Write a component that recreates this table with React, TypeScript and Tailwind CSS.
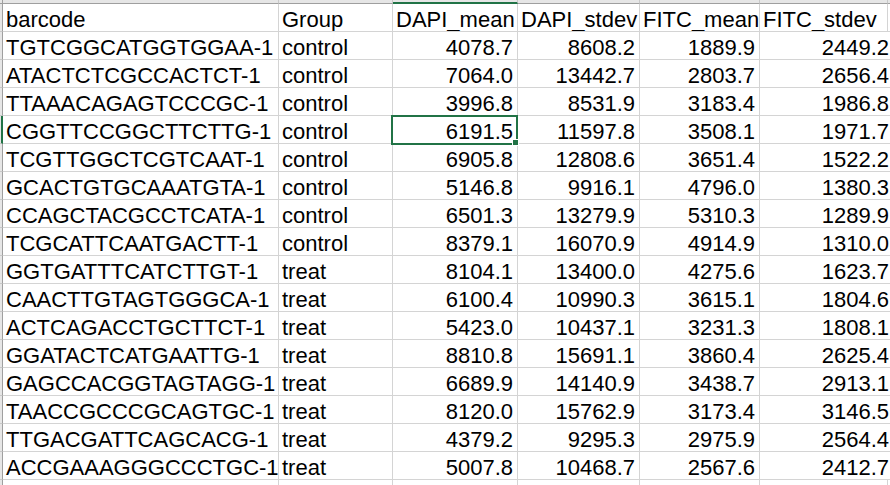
const widths = ['w-[276px]', 'w-[114px]', 'w-[125px]', 'w-[122px]', 'w-[120px]', 'w-[128px]'];

const header = ['barcode', 'Group', 'DAPI_mean', 'DAPI_stdev', 'FITC_mean', 'FITC_stdev'];

const rows: string[][] = [
  ['TGTCGGCATGGTGGAA-1', 'control', '4078.7', '8608.2', '1889.9', '2449.2'],
  ['ATACTCTCGCCACTCT-1', 'control', '7064.0', '13442.7', '2803.7', '2656.4'],
  ['TTAAACAGAGTCCCGC-1', 'control', '3996.8', '8531.9', '3183.4', '1986.8'],
  ['CGGTTCCGGCTTCTTG-1', 'control', '6191.5', '11597.8', '3508.1', '1971.7'],
  ['TCGTTGGCTCGTCAAT-1', 'control', '6905.8', '12808.6', '3651.4', '1522.2'],
  ['GCACTGTGCAAATGTA-1', 'control', '5146.8', '9916.1', '4796.0', '1380.3'],
  ['CCAGCTACGCCTCATA-1', 'control', '6501.3', '13279.9', '5310.3', '1289.9'],
  ['TCGCATTCAATGACTT-1', 'control', '8379.1', '16070.9', '4914.9', '1310.0'],
  ['GGTGATTTCATCTTGT-1', 'treat', '8104.1', '13400.0', '4275.6', '1623.7'],
  ['CAACTTGTAGTGGGCA-1', 'treat', '6100.4', '10990.3', '3615.1', '1804.6'],
  ['ACTCAGACCTGCTTCT-1', 'treat', '5423.0', '10437.1', '3231.3', '1808.1'],
  ['GGATACTCATGAATTG-1', 'treat', '8810.8', '15691.1', '3860.4', '2625.4'],
  ['GAGCCACGGTAGTAGG-1', 'treat', '6689.9', '14140.9', '3438.7', '2913.1'],
  ['TAACCGCCCGCAGTGC-1', 'treat', '8120.0', '15762.9', '3173.4', '3146.5'],
  ['TTGACGATTCAGCACG-1', 'treat', '4379.2', '9295.3', '2975.9', '2564.4'],
  ['ACCGAAAGGGCCCTGC-1', 'treat', '5007.8', '10468.7', '2567.6', '2412.7'],
];

const cellBase =
  'h-full shrink-0 border-b border-[#d4d4d4] pt-[4px] leading-[23px] whitespace-nowrap overflow-hidden';

function RowStrip({ active }: { active?: boolean }) {
  return (
    <div
      className={`w-[3px] h-full shrink-0 bg-[#e6e6e6] border-b border-b-[#c8c8c8] ${
        active ? 'border-r-2 border-r-[#217346]' : 'border-r border-r-[#9f9f9f]'
      }`}
    />
  );
}

function TextRow({ cells }: { cells: string[] }) {
  // header row and empty trailing rows: every cell left aligned, full grid
  return (
    <div className="flex h-[28px]">
      <RowStrip />
      {widths.map((w, i) => (
        <div key={i} className={`${cellBase} ${w} border-r pl-[3px]`}>
          {cells[i] ?? ''}
        </div>
      ))}
      <div className={`${cellBase} flex-1`} />
    </div>
  );
}

function DataRow({ cells, active }: { cells: string[]; active?: boolean }) {
  return (
    <div className="flex h-[28px]">
      <RowStrip active={active} />
      <div className={`${cellBase} ${widths[0]} border-r pl-[3px]`}>{cells[0]}</div>
      <div className={`${cellBase} ${widths[1]} border-r pl-[3px]`}>{cells[1]}</div>
      <div className={`${cellBase} ${widths[2]} border-r pr-[4px] text-right`}>{cells[2]}</div>
      <div className={`${cellBase} ${widths[3]} border-r pr-[4px] text-right`}>{cells[3]}</div>
      <div className={`${cellBase} ${widths[4]} border-r pr-[4px] text-right`}>{cells[4]}</div>
      <div className={`${cellBase} flex-1 pr-[1px] text-right`}>{cells[5]}</div>
    </div>
  );
}

export default function App() {
  return (
    <div className="relative w-[890px] h-[485px] overflow-hidden bg-white text-black text-[22px] font-['Liberation_Sans',Arial,sans-serif]">
      {/* column header strip */}
      <div className="flex h-[4px]">
        <div className="w-[3px] shrink-0 bg-[#e6e6e6] border-b border-r border-[#9f9f9f]" />
        {widths.map((w, i) => (
          <div
            key={i}
            className={`${w} shrink-0 bg-[#e6e6e6] border-r border-r-[#c8c8c8] ${
              i === 2 ? 'border-b-2 border-b-[#217346]' : 'border-b border-b-[#9f9f9f]'
            }`}
          />
        ))}
        <div className="flex-1 bg-[#e6e6e6] border-b border-[#9f9f9f]" />
      </div>

      <TextRow cells={header} />
      {rows.map((r, i) => (
        <DataRow key={i} cells={r} active={i === 3} />
      ))}
      <TextRow cells={[]} />

      {/* selected cell */}
      <div className="absolute left-[391px] top-[115px] w-[127px] h-[30px] border-2 border-[#217346] pointer-events-none" />
      <div className="absolute left-[512px] top-[139px] w-[7px] h-[7px] bg-[#217346] border border-white" />
    </div>
  );
}
